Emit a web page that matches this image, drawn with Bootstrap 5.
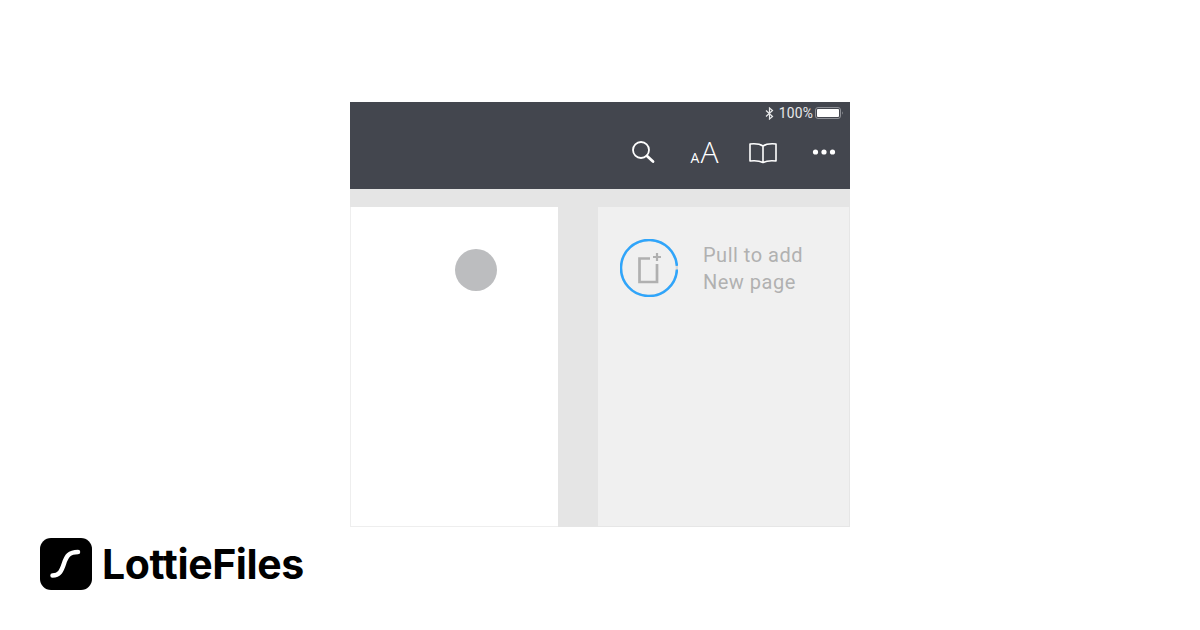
<!DOCTYPE html>
<html lang="en">
<head>
<meta charset="utf-8">
<title>LottieFiles</title>
<link href="https://cdn.jsdelivr.net/npm/bootstrap@5.3.0/dist/css/bootstrap.min.css" rel="stylesheet">
<style>
html,body{height:630px;overflow:hidden;background:#fff}
.stage{padding-top:102px}
.frame{width:500px;height:425px;margin:0 auto}
.topbar{height:87px;background:#43464e;color:#fff}
.statusline{height:22px;padding-right:5px;font:13.8px/22px Roboto,sans-serif;letter-spacing:.25px;color:#e8e9ea}
.pct{margin:0 2px 0 5px}
.tools{height:65px;padding:11px 14px 0 0}
.toolbtn{display:flex;align-items:center;justify-content:center;height:34px}
.aa{width:31px;margin-left:33px;font-family:"Open Sans",sans-serif;font-weight:300;line-height:1;color:#fff;align-items:baseline;padding-top:2px}
.aa-s{font-size:14px;font-weight:400;margin-right:1px}
.aa-b{font-size:30px}
.sheet{height:338px;background:#e5e5e5;padding-top:18px}
.pg-left{width:208px;background:#fff;border-left:1px solid #eeeeee;border-bottom:1px solid #eeeeee;padding:42px 0 0 104px}
.dot{width:42px;height:42px;border-radius:50%;background:#bcbdbf}
.pg-right{width:252px;margin-left:40px;background:#f0f0f0;border-right:1px solid #e6e6e6;border-bottom:1px solid #e6e6e6;padding:32px 0 0 22px}
.hint{margin-left:25px;font:20px/27px Roboto,sans-serif;letter-spacing:.5px;color:#b1b1b1;padding-top:3px}
.brand{padding:11px 0 0 40px;gap:10px}
.brand-box{width:52px;height:52px;border-radius:11px;background:#000}
.brand-name{font:700 41px/52px Inter,sans-serif;letter-spacing:-.38px;color:#000}
</style>
</head>
<body>
<div class="stage">
  <div class="frame">
    <div class="topbar">
      <div class="statusline d-flex justify-content-end align-items-center">
        <svg width="9" height="13" viewBox="0 0 9 13" fill="none" stroke="#e8e9ea" stroke-width="1.2"><path d="M1 3.500 7.500 9.500 4.500 12V1L7.500 3.500 1 9.500"/></svg>
        <span class="pct">100%</span>
        <svg width="30" height="12" viewBox="0 0 30 12"><rect x=".5" y=".5" width="25" height="11" rx="2.500" fill="none" stroke="#8f9197"/><rect x="2" y="2" width="22" height="8" rx="1" fill="#fff"/><path d="M27 4.500c1 .3 1 2.700 0 3z" fill="#8f9197"/></svg>
      </div>
      <div class="tools d-flex justify-content-end align-items-start">
        <svg class="toolbtn" width="26" height="34" viewBox="0 0 26 34" fill="none" stroke="#fff" stroke-linecap="round"><circle cx="11" cy="15" r="8" stroke-width="1.8"/><path d="M17 21l6 5.500" stroke-width="2.800"/></svg>
        <div class="toolbtn aa d-flex"><span class="aa-s">A</span><span class="aa-b">A</span></div>
        <svg class="toolbtn" style="margin-left:28px" width="30" height="34" viewBox="0 0 30 34" fill="none" stroke="#fff" stroke-width="1.6" stroke-linejoin="round"><path d="M15 11c-3-2-8-2.500-13-2v17c5-.5 10 0 13 1.500 3-1.500 8-2 13-1.500V9c-5-.5-10 0-13 2zv16.500"/></svg>
        <svg class="toolbtn" style="margin-left:34px" width="24" height="34" viewBox="0 0 24 34" fill="#fff"><circle cx="3.500" cy="17" r="2.600"/><circle cx="12" cy="17" r="2.600"/><circle cx="20.500" cy="17" r="2.600"/></svg>
      </div>
    </div>
    <div class="sheet d-flex align-items-stretch">
      <div class="pg-left"><div class="dot"></div></div>
      <div class="pg-right d-flex align-items-start">
        <svg width="58" height="58" viewBox="0 0 58 58" fill="none" class="flex-shrink-0">
          <circle cx="29" cy="29" r="28" stroke="#d9d9d9" stroke-width="2.500"/>
          <circle cx="29" cy="29" r="28" stroke="#2fa5fb" stroke-width="2.500" stroke-dasharray="172 4" transform="rotate(3 29 29)"/>
          <path d="M30 19.500H19.500V43H37V25" stroke="#b0b0b0" stroke-width="2.700"/>
          <path d="M33 18h8M37 14v8" stroke="#b0b0b0" stroke-width="2.200"/>
        </svg>
        <div class="hint">Pull to add<br>New page</div>
      </div>
    </div>
  </div>
  <div class="brand d-flex align-items-center">
    <div class="brand-box d-flex align-items-center justify-content-center">
      <svg width="52" height="52" viewBox="0 0 52 52" fill="none"><path d="M12.500 37.500c7 0 9-4.500 11.500-12S29 14 38 14" stroke="#fff" stroke-width="4.500" stroke-linecap="round"/></svg>
    </div>
    <div class="brand-name">LottieFiles</div>
  </div>
</div>
</body>
</html>
